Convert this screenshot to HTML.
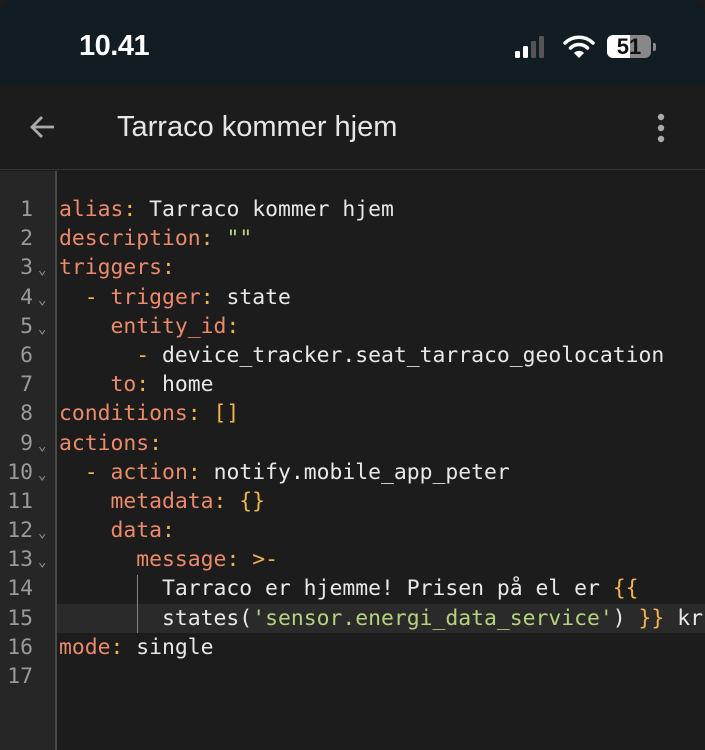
<!DOCTYPE html>
<html><head><meta charset="utf-8"><style>
*{margin:0;padding:0;box-sizing:border-box}
body{width:705px;height:750px;overflow:hidden;background:#1c1c1c;font-family:"Liberation Sans",sans-serif;position:relative}
.status{position:absolute;left:0;top:0;width:705px;height:85px;background:#111d22;border-radius:14px 14px 0 0}
.time{position:absolute;left:79px;top:30px;color:#fff;font-size:29px;font-weight:bold;letter-spacing:-0.5px}
.hdr{position:absolute;left:0;top:85px;width:705px;height:85px;background:#1c1c1c;border-bottom:1px solid #333}
.title{position:absolute;left:117px;top:26px;color:#e6e6e6;font-size:29px}
.gutter{position:absolute;left:0;top:171px;width:57px;height:579px;background:#262626;border-right:2px solid #4a4a4a}
.code{position:absolute;left:0;top:195px;width:705px;font-family:"DejaVu Sans Mono",monospace;font-size:21.4px;line-height:29.2px;color:#e8e8e8}
.ln{display:block;height:29.2px;position:relative}
.n{position:absolute;left:0;width:33px;text-align:right;color:#9a9a9a}
.f{position:absolute;left:38px;top:3px;color:#999;font-size:14px}
.t{position:absolute;left:59px;white-space:pre}
.k{color:#ec8a6a}.p{color:#f0b34e}.s{color:#b5d27c}
.bar{position:absolute;left:137px;width:1px;height:58px;top:575px;background:#888}
</style></head><body>
<div class="status">
<div class="time">10.41</div>
<svg style="position:absolute;left:514px;top:36px" width="38" height="22" viewBox="0 0 38 22">
<rect x="1" y="15" width="5" height="7" rx="1.5" fill="#fff"/><rect x="9" y="10" width="5" height="12" rx="1.5" fill="#fff"/><rect x="17" y="5" width="5" height="17" rx="1.5" fill="#555"/><rect x="25" y="0" width="5" height="22" rx="1.5" fill="#555"/></svg>
<svg style="position:absolute;left:563px;top:35px" width="32" height="24" viewBox="0 0 32 24">
<path d="M2 8 A20 20 0 0 1 30 8" stroke="#fff" stroke-width="3.5" fill="none" stroke-linecap="round"/>
<path d="M7.5 13 A12 12 0 0 1 24.5 13" stroke="#fff" stroke-width="3.5" fill="none" stroke-linecap="round"/>
<path d="M11 18 L16 23 L21 18 A7 7 0 0 0 11 18Z" fill="#fff"/></svg>
<div style="position:absolute;left:607px;top:35px;width:44px;height:23px;border-radius:6px;background:linear-gradient(90deg,#fff 0 52%,#888 52%);"></div>
<div style="position:absolute;left:653px;top:43px;width:3px;height:8px;border-radius:0 2px 2px 0;background:#888"></div>
<div style="position:absolute;left:607px;top:35px;width:44px;text-align:center;font-weight:bold;font-size:22px;line-height:23px;color:#111">51</div>
</div>
<div class="hdr">
<svg style="position:absolute;left:29px;top:28px" width="28" height="28" viewBox="0 0 28 28"><path d="M25 14H4M13 4L3 14L13 24" stroke="#aaa" stroke-width="2.8" fill="none"/></svg>
<div class="title">Tarraco kommer hjem</div>
<svg style="position:absolute;left:655px;top:28px" width="12" height="30" viewBox="0 0 12 30"><circle cx="6" cy="4" r="3.2" fill="#aaa"/><circle cx="6" cy="15" r="3.2" fill="#aaa"/><circle cx="6" cy="26" r="3.2" fill="#aaa"/></svg>
</div>
<div class="gutter"></div>
<div class="code"><span class="ln"><span class="n">1</span><span class="t"><span class="k">alias</span><span class="p">:</span> Tarraco kommer hjem</span></span><span class="ln"><span class="n">2</span><span class="t"><span class="k">description</span><span class="p">:</span> <span class="s">""</span></span></span><span class="ln"><span class="n">3</span><span class="f">⌄</span><span class="t"><span class="k">triggers</span><span class="p">:</span></span></span><span class="ln"><span class="n">4</span><span class="f">⌄</span><span class="t">  <span class="p">-</span> <span class="k">trigger</span><span class="p">:</span> state</span></span><span class="ln"><span class="n">5</span><span class="f">⌄</span><span class="t">    <span class="k">entity_id</span><span class="p">:</span></span></span><span class="ln"><span class="n">6</span><span class="t">      <span class="p">-</span> device_tracker.seat_tarraco_geolocation</span></span><span class="ln"><span class="n">7</span><span class="t">    <span class="k">to</span><span class="p">:</span> home</span></span><span class="ln"><span class="n">8</span><span class="t"><span class="k">conditions</span><span class="p">: []</span></span></span><span class="ln"><span class="n">9</span><span class="f">⌄</span><span class="t"><span class="k">actions</span><span class="p">:</span></span></span><span class="ln"><span class="n">10</span><span class="f">⌄</span><span class="t">  <span class="p">-</span> <span class="k">action</span><span class="p">:</span> notify.mobile_app_peter</span></span><span class="ln"><span class="n">11</span><span class="t">    <span class="k">metadata</span><span class="p">: {}</span></span></span><span class="ln"><span class="n">12</span><span class="f">⌄</span><span class="t">    <span class="k">data</span><span class="p">:</span></span></span><span class="ln"><span class="n">13</span><span class="f">⌄</span><span class="t">      <span class="k">message</span><span class="p">: &gt;-</span></span></span><span class="ln"><span class="n">14</span><span class="t">        Tarraco er hjemme! Prisen på el er <span class="p">{{</span></span></span><span class="ln"><span style="position:absolute;left:57px;top:0;width:648px;height:29.2px;background:#2a2a2a"></span><span class="n">15</span><span class="t">        states(<span class="s">'sensor.energi_data_service'</span>) <span class="p">}}</span> kr</span></span><span class="ln"><span class="n">16</span><span class="t"><span class="k">mode</span><span class="p">:</span> single</span></span><span class="ln"><span class="n">17</span></span></div>
<div class="bar"></div>
</body></html>
